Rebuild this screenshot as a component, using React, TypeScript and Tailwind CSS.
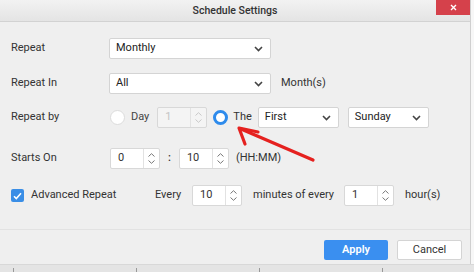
import React from "react";

const font = { fontFamily: "Roboto, 'Noto Sans', sans-serif" };

function clsx(...parts: (string | false | undefined)[]) {
  return parts.filter(Boolean).join(" ");
}

function Chevron() {
  return (
    <svg width="9" height="6" viewBox="0 0 9 6">
      <path d="M1 1l3.5 3.5L8 1" fill="none" stroke="#444" strokeWidth="1.6" />
    </svg>
  );
}

function Select({ value, width }: { value: string; width: string }) {
  return (
    <div
      className={`${width} flex h-[21px] items-center justify-between rounded-[2px] border border-[#d4d4d4] bg-white pl-[6px] pr-[7px] text-[11px] text-[#222]`}
    >
      <span>{value}</span>
      <Chevron />
    </div>
  );
}

function Spinner({ value, disabled = false }: { value: string; disabled?: boolean }) {
  const stroke = disabled ? "#c8c8c8" : "#777";
  return (
    <div
      className={clsx(
        "flex h-[21px] w-[50px] items-stretch rounded-[2px] border border-[#d8d8d8] text-[11px]",
        disabled ? "bg-[#f4f4f4] text-[#c4c4c4]" : "bg-white text-[#333]"
      )}
    >
      <div className="flex flex-1 items-center pl-[7px]">{value}</div>
      <div className="flex w-[16px] flex-col items-center justify-center gap-[3px] border-l border-[#e2e2e2]">
        <svg width="7" height="4" viewBox="0 0 7 4">
          <path d="M0.5 3.5L3.5 0.7L6.5 3.5" fill="none" stroke={stroke} strokeWidth="1" />
        </svg>
        <svg width="7" height="4" viewBox="0 0 7 4">
          <path d="M0.5 0.5L3.5 3.3L6.5 0.5" fill="none" stroke={stroke} strokeWidth="1" />
        </svg>
      </div>
    </div>
  );
}

export default function App() {
  return (
    <div className="relative h-[272px] w-[474px] overflow-hidden bg-[#f7f7f7]" style={font}>
      <div className="flex h-[264px] w-[471px] flex-col border-r border-[#cfcfcf] bg-[#efefef]">
        {/* title bar */}
        <div className="relative flex h-[22px] shrink-0 items-center justify-center border-b border-[#d2d2d2] bg-gradient-to-b from-[#f2f2f2] to-[#e4e4e4]">
          <span className="text-[10.5px] font-medium text-[#333]">Schedule Settings</span>
          <div className="absolute right-0 top-0 flex h-[15px] w-[34px] items-center justify-center bg-[#d5414b]">
            <svg width="7" height="7" viewBox="0 0 7 7">
              <path d="M1 1l5 5M6 1l-5 5" stroke="#fff" strokeWidth="1.4" />
            </svg>
          </div>
        </div>

        {/* form */}
        <div className="flex flex-col pl-[11px] text-[11px] text-[#333]">
          <div className="mt-[16px] flex h-[21px] items-center">
            <span className="w-[98px]">Repeat</span>
            <Select value="Monthly" width="w-[162px]" />
          </div>

          <div className="mt-[14px] flex h-[21px] items-center">
            <span className="w-[98px]">Repeat In</span>
            <Select value="All" width="w-[162px]" />
            <span className="ml-[10px]">Month(s)</span>
          </div>

          <div className="mt-[13px] flex h-[21px] items-center">
            <span className="w-[99px]">Repeat by</span>
            <span className="h-[15px] w-[15px] rounded-full border border-[#dcdcdc] bg-white" />
            <span className="ml-[6px] text-[#444]">Day</span>
            <div className="ml-[8px]">
              <Spinner value="1" disabled />
            </div>
            <span className="ml-[6px] h-[15px] w-[15px] rounded-full border-[3px] border-[#2e8bec] bg-white" />
            <span className="ml-[5px]">The</span>
            <div className="ml-[6px]">
              <Select value="First" width="w-[81px]" />
            </div>
            <div className="ml-[9px]">
              <Select value="Sunday" width="w-[81px]" />
            </div>
          </div>

          <div className="mt-[20px] flex h-[21px] items-center">
            <span className="w-[99px]">Starts On</span>
            <Spinner value="0" />
            <span className="mx-[8px] font-medium">:</span>
            <Spinner value="10" />
            <span className="ml-[7px]">(HH:MM)</span>
          </div>

          <div className="mt-[16px] flex h-[21px] items-center">
            <span className="flex h-[13px] w-[13px] items-center justify-center rounded-[2px] bg-[#3a8ee6]">
              <svg width="9" height="8" viewBox="0 0 9 8">
                <path d="M1 4.2l2.3 2.3L8 1.3" fill="none" stroke="#fff" strokeWidth="1.6" />
              </svg>
            </span>
            <span className="ml-[7px] w-[124px]">Advanced Repeat</span>
            <span className="w-[37px]">Every</span>
            <Spinner value="10" />
            <span className="ml-[11px] w-[91px]">minutes of every</span>
            <Spinner value="1" />
            <span className="ml-[11px]">hour(s)</span>
          </div>
        </div>

        {/* footer */}
        <div className="mt-[23px] border-t border-[#e2e2e2]" />
        <div className="mt-[10px] flex justify-end gap-[9px] pr-[8px]">
          <button className="h-[20px] w-[64px] rounded-[2px] bg-[#3a8ff0] text-[11px] font-semibold text-white">
            Apply
          </button>
          <button className="h-[20px] w-[65px] rounded-[2px] border border-[#d4d4d4] bg-white text-[11px] text-[#333]">
            Cancel
          </button>
        </div>
      </div>

      {/* strip below the dialog */}
      <div className="flex h-[8px] w-full items-end border-t border-[#d8d8d8] bg-[#e4e4e4]">
        <div className="ml-[13px] h-[4px] w-px bg-[#999]" />
        <div className="ml-[122px] h-[4px] w-px bg-[#999]" />
        <div className="ml-[122px] h-[4px] w-px bg-[#999]" />
        <div className="ml-[122px] h-[4px] w-px bg-[#999]" />
      </div>

      {/* red annotation arrow */}
      <svg className="absolute left-0 top-0" width="474" height="272" viewBox="0 0 474 272">
        <path d="M313 160L241 129" stroke="#e5211f" strokeWidth="3.2" strokeLinecap="round" fill="none" />
        <path d="M258 132L239 128L245 144" stroke="#e5211f" strokeWidth="3.2" strokeLinecap="round" strokeLinejoin="round" fill="none" />
      </svg>
    </div>
  );
}
